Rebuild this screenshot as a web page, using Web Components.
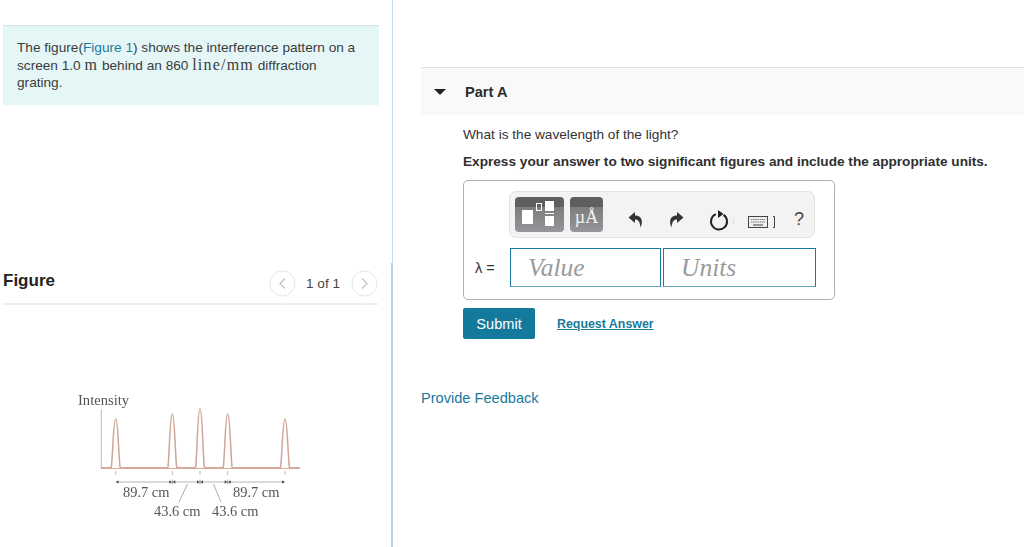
<!DOCTYPE html>
<html lang="en">
<head>
<meta charset="utf-8">
<title>Part A</title>
<style>
  html, body { margin: 0; height: 100%; background: #fff; }
  body { font-family: "Liberation Sans", Arial, sans-serif; color: #333; overflow: hidden; }
</style>
</head>
<body>
<mp-problem>
  <info-box slot="left">The figure(<a>Figure 1</a>) shows the interference pattern on a<br>screen 1.0 <var>m</var> behind an 860 <var>line/mm</var> diffraction<br>grating.</info-box>
  <figure-pager slot="left"></figure-pager>
  <figure-plot slot="left"></figure-plot>
  <part-header slot="right">Part A</part-header>
  <part-body slot="right"></part-body>
</mp-problem>

<script>
class MpProblem extends HTMLElement {
  constructor() {
    super();
    this.attachShadow({ mode: 'open' });
    this.shadowRoot.innerHTML = `
      <style>
        :host { display: flex; width: 1024px; height: 547px; }
        .left {
          box-sizing: border-box;
          width: 393px;
          padding: 25px 14px 0 3px;
          background:
            linear-gradient(#c9dbe8, #c9dbe8) right top / 1px 263px no-repeat,
            linear-gradient(#bfd2e3, #bfd2e3) right bottom / 2px 284px no-repeat;
        }
        .right { flex: 1; padding-top: 67px; padding-left: 28px; }
      </style>
      <div class="left"><slot name="left"></slot></div>
      <div class="right"><slot name="right"></slot></div>
    `;
  }
}

class InfoBox extends HTMLElement {
  constructor() {
    super();
    this.attachShadow({ mode: 'open' });
    this.shadowRoot.innerHTML = `
      <style>
        :host {
          display: block;
          box-sizing: border-box;
          height: 80px;
          padding: 13px 14px 0;
          background: #e5f6f7;
          border-top: 1px solid #d5e3ea;
          font-size: 13.65px;
          line-height: 17.5px;
          color: #3c3c3c;
        }
        ::slotted(a) { color: #1a7a9c; }
        ::slotted(var) {
          font-family: "Liberation Serif", serif;
          font-style: normal;
          font-size: 16px;
          line-height: 0;
          letter-spacing: 1.2px;
        }
      </style>
      <slot></slot>
    `;
  }
}

class FigurePager extends HTMLElement {
  constructor() {
    super();
    this.attachShadow({ mode: 'open' });
    this.shadowRoot.innerHTML = `
      <style>
        :host {
          display: flex;
          align-items: center;
          box-sizing: border-box;
          height: 41px;
          margin-top: 159px;
          margin-right: 1px;
          border-bottom: 2px solid #eeeeee;
        }
        b { flex: 1; font-size: 17px; color: #222; position: relative; top: -3px; }
        span { font-size: 13.6px; color: #444; margin: 0 11px 0 10px; }
        svg { display: block; }
      </style>
      <b>Figure</b>
      <svg width="27" height="27" viewBox="0 0 27 27"><circle cx="13.5" cy="13.5" r="12.5" fill="#fff" stroke="#e6e6e6"/><path d="M16 8.5 11 13.5 16 18.5" fill="none" stroke="#c4c4c4" stroke-width="1.3"/></svg>
      <span>1 of 1</span>
      <svg width="27" height="27" viewBox="0 0 27 27"><circle cx="13.5" cy="13.5" r="12.5" fill="#fff" stroke="#e6e6e6"/><path d="M11 8.5 16 13.5 11 18.5" fill="none" stroke="#c4c4c4" stroke-width="1.3"/></svg>
    `;
  }
}

class FigurePlot extends HTMLElement {
  constructor() {
    super();
    this.attachShadow({ mode: 'open' });
    // peaks: centre x and top y, the diagram's own coordinates
    const peaks = [[45.7, 29], [102.3, 24], [130, 19], [157.7, 24], [215, 29]];
    const base = 78;
    const peakPaths = peaks.map(([x, top]) =>
      `<path d="M${x - 4.5} ${base} C${x - 3} ${base - 8} ${x - 2.5} ${top} ${x} ${top} C${x + 2.5} ${top} ${x + 3} ${base - 8} ${x + 4.5} ${base}" fill="#fff" stroke="#d0a496" stroke-width="1.5"/>`
    ).join('');
    const ticks = peaks.map(([x]) => `<path d="M${x} 81V85" stroke="#bbb"/>`).join('');
    const marks = [102.3, 130, 157.7].map(c =>
      `<path d="M${c - 3} 90.300 ${c - .6} 92 ${c - 3} 93.700ZM${c + 3} 90.300 ${c + .6} 92 ${c + 3} 93.700Z" fill="#444"/><path d="M${c} 89.500v5" stroke="#777" stroke-width=".7"/>`
    ).join('');
    this.shadowRoot.innerHTML = `
      <style>
        :host { display: block; margin-top: 85px; margin-left: 67px; }
        svg { display: block; filter: blur(0.35px); }
        text { font-family: "Liberation Serif", serif; font-size: 14.4px; fill: #555; }
      </style>
      <svg width="240" height="135" viewBox="0 0 240 135">
        <text x="8" y="14.5" style="font-size:14.6px">Intensity</text>
        <path d="M31.3 19V78" stroke="#bbb" fill="none"/>
        <path d="M31 78H230" stroke="#c98f7d" stroke-width="1.5" fill="none"/>
        ${peakPaths}
        ${ticks}
        <path d="M47 92H214" stroke="#b5b5b5" fill="none"/>
        <path d="M45.5 92l3-1.500v3zM215 92l-3-1.500v3z" fill="#444"/>
        ${marks}
        <path d="M117.500 94L109 112M143.500 94L151 112" stroke="#aaa" fill="none"/>
        <text x="53" y="107">89.7 cm</text>
        <text x="163" y="107">89.7 cm</text>
        <text x="84" y="126">43.6 cm</text>
        <text x="142" y="126">43.6 cm</text>
      </svg>
    `;
  }
}

class PartHeader extends HTMLElement {
  constructor() {
    super();
    this.attachShadow({ mode: 'open' });
    this.shadowRoot.innerHTML = `
      <style>
        :host {
          display: flex;
          align-items: center;
          height: 48px;
          box-sizing: border-box;
          background: #f9f9f9;
          border-top: 1px solid #e0e0e0;
          padding-left: 13px;
          font-size: 14.6px;
          font-weight: bold;
          color: #2d2d2d;
        }
        i { width: 0; height: 0; margin-right: 19px; border: 6px solid transparent; border-top: 6px solid #222; border-bottom: 0; }
      </style>
      <i></i><slot></slot>
    `;
  }
}

class MathToolbar extends HTMLElement {
  constructor() {
    super();
    this.attachShadow({ mode: 'open' });
    this.shadowRoot.innerHTML = `
      <style>
        :host {
          display: flex;
          align-items: center;
          box-sizing: border-box;
          width: 306px;
          height: 47px;
          margin-left: 45px;
          padding: 0 0 0 5px;
          background: #f3f3f3;
          border: 1px solid #e2e2e2;
          border-radius: 7px;
        }
        .tool {
          box-sizing: border-box;
          height: 35px;
          border-radius: 4px;
          background: linear-gradient(#5f5f5f 0, #5f5f5f 10px, #7d7d7d 10px, #96969b 100%);
          position: relative;
        }
        .tpl { width: 49px; margin-right: 6px; }
        .unit { width: 33px; color: #f4f4f4; font: 18px/1 "Liberation Serif", serif; text-align: center; padding-top: 11px; }
        .tpl em { position: absolute; background: #fff; display: block; }
        svg { display: block; position: relative; }
      </style>
      <div class="tool tpl">
        <em style="left:7px;top:13px;width:11px;height:14px"></em>
        <em style="left:21px;top:6px;width:4px;height:6px;background:none;border:1px solid #fff"></em>
        <em style="left:30px;top:4px;width:9px;height:10px"></em>
        <em style="left:30px;top:16px;width:9px;height:1px"></em>
        <em style="left:30px;top:19px;width:9px;height:10px"></em>
      </div>
      <div class="tool unit">µÅ</div>
      <svg style="margin-left:25px;top:5px" width="15" height="17" viewBox="0 0 15 17"><path d="M7 1 0.500 6.500 7 12V8.500C10.500 8.500 12 11 12.500 16.500 15.500 10 13.500 4.500 7 4.500Z" fill="#333"/></svg>
      <svg style="margin-left:26px;top:5px" width="15" height="17" viewBox="0 0 15 17"><path d="M8 1 14.500 6.500 8 12V8.500C4.500 8.500 3 11 2.500 16.500-.5 10 1.500 4.500 8 4.500Z" fill="#333"/></svg>
      <svg style="margin-left:25px;top:5px" width="20" height="22" viewBox="0 0 20 22"><path d="M6.800 5.200A8 8 0 1 0 14.500 5.900" fill="none" stroke="#222" stroke-width="2"/><path d="M9 1V9L14.500 5Z" fill="#222"/></svg>
      <svg style="margin-left:3px;top:6px" width="3" height="8" viewBox="0 0 3 8"><path d="M1.500 1V7" stroke="#ddd"/></svg>
      <svg style="margin-left:13px;top:8px" width="30" height="14" viewBox="0 0 30 14">
        <rect x=".5" y=".5" width="19" height="11" fill="#eee" stroke="#444"/>
        <path d="M3 3.500H17M3 6H17" stroke="#777" stroke-dasharray="1.500 .7"/>
        <path d="M5 9H15" stroke="#666" stroke-width="1.300"/>
        <path d="M25 .5H26.500V11.500H25" fill="none" stroke="#444"/>
      </svg>
      <span style="margin-left:16px;font-size:18px;color:#444;position:relative;top:5px">?</span>
    `;
  }
}

class AnswerField extends HTMLElement {
  constructor() {
    super();
    this.attachShadow({ mode: 'open' });
    this.shadowRoot.innerHTML = `
      <style>
        :host {
          display: flex;
          align-items: center;
          box-sizing: border-box;
          height: 39px;
          padding-left: 17px;
          border: 1px solid #1a7a9c;
          border-bottom-color: #5ba3bc;
          font: italic 25.5px "Liberation Serif", serif;
          color: #9b9b9b;
          background: #fff;
        }
      </style>
      <slot></slot>
    `;
  }
}

class PartBody extends HTMLElement {
  constructor() {
    super();
    this.attachShadow({ mode: 'open' });
    this.shadowRoot.innerHTML = `
      <style>
        :host { display: block; padding-left: 42px; font-size: 13.65px; color: #333; }
        p { margin: 0; line-height: 18px; }
        .q { padding-top: 11px; }
        .hint { padding-top: 8px; font-weight: bold; font-size: 13.63px; color: #2f2f2f; position: relative; top: 1px; }
        .answer {
          box-sizing: border-box;
          width: 372px;
          height: 120px;
          margin-top: 10px;
          padding-top: 10px;
          border: 1px solid #b0b0b0;
          border-radius: 5px;
        }
        .row { display: flex; align-items: center; margin-top: 10px; }
        .row label { width: 46px; padding-left: 11px; box-sizing: border-box; font-size: 14.5px; }
        .row answer-field:nth-of-type(1) { width: 151px; margin-right: 2px; }
        .row answer-field:nth-of-type(2) { width: 153px; }
        .actions { display: flex; align-items: center; margin-top: 8px; }
        .submit {
          box-sizing: border-box;
          width: 72px;
          height: 31px;
          line-height: 32px;
          text-align: center;
          font-size: 14.6px;
          background: #137a9e;
          color: #fff;
          border-radius: 2px;
        }
        .req { margin-left: 22px; font-size: 12.4px; font-weight: bold; color: #1a7a9c; text-decoration: underline; }
        .fb { margin: 51px 0 0 -42px; font-size: 14.6px; color: #1a7a9c; }
      </style>
      <p class="q">What is the wavelength of the light?</p>
      <p class="hint">Express your answer to two significant figures and include the appropriate units.</p>
      <div class="answer">
        <math-toolbar></math-toolbar>
        <div class="row">
          <label>λ =</label>
          <answer-field>Value</answer-field>
          <answer-field>Units</answer-field>
        </div>
      </div>
      <div class="actions">
        <div class="submit">Submit</div>
        <div class="req">Request Answer</div>
      </div>
      <div class="fb">Provide Feedback</div>
    `;
  }
}

customElements.define('mp-problem', MpProblem);
customElements.define('info-box', InfoBox);
customElements.define('figure-pager', FigurePager);
customElements.define('figure-plot', FigurePlot);
customElements.define('part-header', PartHeader);
customElements.define('math-toolbar', MathToolbar);
customElements.define('answer-field', AnswerField);
customElements.define('part-body', PartBody);
</script>
</body>
</html>
